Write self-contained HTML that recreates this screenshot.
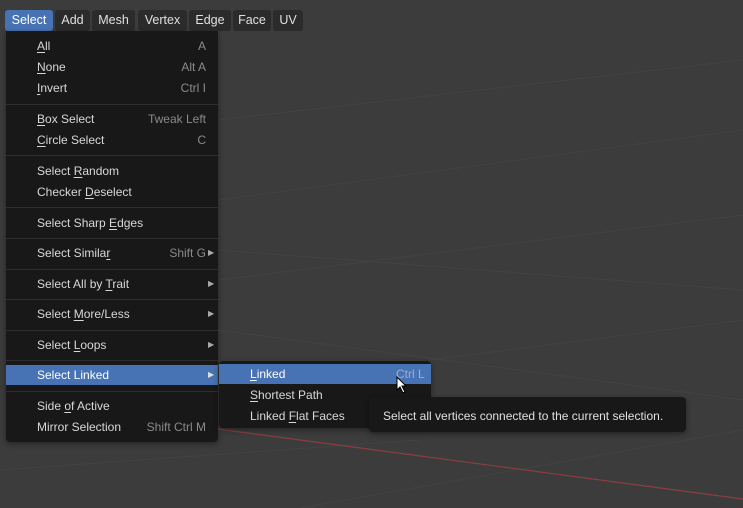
<!DOCTYPE html>
<html><head><style>
body{margin:0;width:743px;height:508px;overflow:hidden;background:#3c3c3c;font-family:"Liberation Sans","DejaVu Sans",sans-serif;font-size:12px;color:#d8d8d8;position:relative}
.a{position:absolute;white-space:nowrap}
.hdr{position:absolute;top:10px;height:21px;line-height:21px;background:#2b2b2b;border-radius:3px;text-align:center;color:#e0e0e0;font-size:12.5px}
.menu{position:absolute;left:6px;top:31px;width:212px;height:411px;background:#181818;border-radius:0 0 4px 4px;box-shadow:0 2px 6px rgba(0,0,0,.4)}
.sep{position:absolute;left:0;width:212px;height:1px;background:#2e2e2e}
u{text-decoration:underline;text-underline-offset:2px}
.t .a{margin-top:1px}
</style></head><body>
<svg class="a" style="left:0;top:0" width="743" height="508">
<g stroke="#434343" stroke-width="1" fill="none">
<line x1="218" y1="120" x2="743" y2="60"/><line x1="218" y1="200" x2="743" y2="130"/><line x1="218" y1="280" x2="743" y2="215"/><line x1="430" y1="360" x2="743" y2="320"/>
<line x1="0" y1="470" x2="420" y2="440"/><line x1="300" y1="508" x2="743" y2="430"/>
<line x1="218" y1="330" x2="743" y2="400"/><line x1="218" y1="250" x2="743" y2="290"/>
</g>
<line x1="150" y1="420" x2="743" y2="499" stroke="#8a3e42" stroke-width="1.2"/>
</svg>
<div class="hdr" style="left:5px;width:48px;background:#4772b3;color:#fff">Select</div>
<div class="hdr" style="left:55px;width:35px">Add</div>
<div class="hdr" style="left:92px;width:43px">Mesh</div>
<div class="hdr" style="left:138px;width:49px">Vertex</div>
<div class="hdr" style="left:189px;width:42px">Edge</div>
<div class="hdr" style="left:233px;width:38px">Face</div>
<div class="hdr" style="left:273px;width:30px">UV</div>
<div class="menu">
<div class="a" style="left:0;top:334px;width:212px;height:20px;background:#4772b3"></div>
<div class="sep" style="top:73px"></div><div class="sep" style="top:124px"></div><div class="sep" style="top:176px"></div><div class="sep" style="top:207px"></div><div class="sep" style="top:238px"></div><div class="sep" style="top:268px"></div><div class="sep" style="top:299px"></div><div class="sep" style="top:329px"></div><div class="sep" style="top:360px"></div>
</div>
<div class="a t" style="left:0;top:1px;width:743px">
<div class="a" style="left:37px;top:37px"><u>A</u>ll</div><div class="a" style="right:537px;top:37px;color:#8a8a8a">A</div>
<div class="a" style="left:37px;top:58px"><u>N</u>one</div><div class="a" style="right:537px;top:58px;color:#8a8a8a">Alt A</div>
<div class="a" style="left:37px;top:79px"><u>I</u>nvert</div><div class="a" style="right:537px;top:79px;color:#8a8a8a">Ctrl I</div>
<div class="a" style="left:37px;top:110px"><u>B</u>ox Select</div><div class="a" style="right:537px;top:110px;color:#8a8a8a">Tweak Left</div>
<div class="a" style="left:37px;top:131px"><u>C</u>ircle Select</div><div class="a" style="right:537px;top:131px;color:#8a8a8a">C</div>
<div class="a" style="left:37px;top:162px">Select <u>R</u>andom</div>
<div class="a" style="left:37px;top:183px">Checker <u>D</u>eselect</div>
<div class="a" style="left:37px;top:214px">Select Sharp <u>E</u>dges</div>
<div class="a" style="left:37px;top:244px">Select Simila<u>r</u></div><div class="a" style="right:537px;top:244px;color:#8a8a8a">Shift G</div><div class="a" style="left:208px;top:246px;font-size:8px;color:#aaa">▶</div>
<div class="a" style="left:37px;top:275px">Select All by <u>T</u>rait</div><div class="a" style="left:208px;top:277px;font-size:8px;color:#aaa">▶</div>
<div class="a" style="left:37px;top:305px">Select <u>M</u>ore/Less</div><div class="a" style="left:208px;top:307px;font-size:8px;color:#aaa">▶</div>
<div class="a" style="left:37px;top:336px">Select <u>L</u>oops</div><div class="a" style="left:208px;top:338px;font-size:8px;color:#aaa">▶</div>
<div class="a" style="left:37px;top:366px;color:#fff">Select Linked</div><div class="a" style="left:208px;top:368px;font-size:8px;color:#ddd">▶</div>
<div class="a" style="left:37px;top:397px">Side <u>o</u>f Active</div>
<div class="a" style="left:37px;top:418px">Mirror Selection</div><div class="a" style="right:537px;top:418px;color:#8a8a8a">Shift Ctrl M</div>
</div>
<div class="a" style="left:219px;top:361px;width:212px;height:67px;background:#181818;border-radius:4px;box-shadow:0 2px 6px rgba(0,0,0,.4)"></div>
<div class="a" style="left:219px;top:364px;width:212px;height:20px;background:#4772b3"></div>
<div class="a" style="left:250px;top:367px;color:#fff"><u>L</u>inked</div>
<div class="a" style="left:396px;top:367px;color:#9ab0d6">Ctrl L</div>
<div class="a" style="left:250px;top:388px"><u>S</u>hortest Path</div>
<div class="a" style="left:250px;top:409px">Linked <u>F</u>lat Faces</div>
<div class="a" style="left:369px;top:397px;width:317px;height:35px;background:#181818;border-radius:4px;box-shadow:0 2px 6px rgba(0,0,0,.4)"></div>
<div class="a" style="left:383px;top:409px;color:#e0e0e0">Select all vertices connected to the current selection.</div>
<svg class="a" style="left:396px;top:376px" width="12" height="18"><path d="M1 1 L1 14 L4 11 L7 17 L9 16 L6 10 L10 10 Z" fill="#fff" stroke="#000" stroke-width="1"/></svg>
</body></html>
